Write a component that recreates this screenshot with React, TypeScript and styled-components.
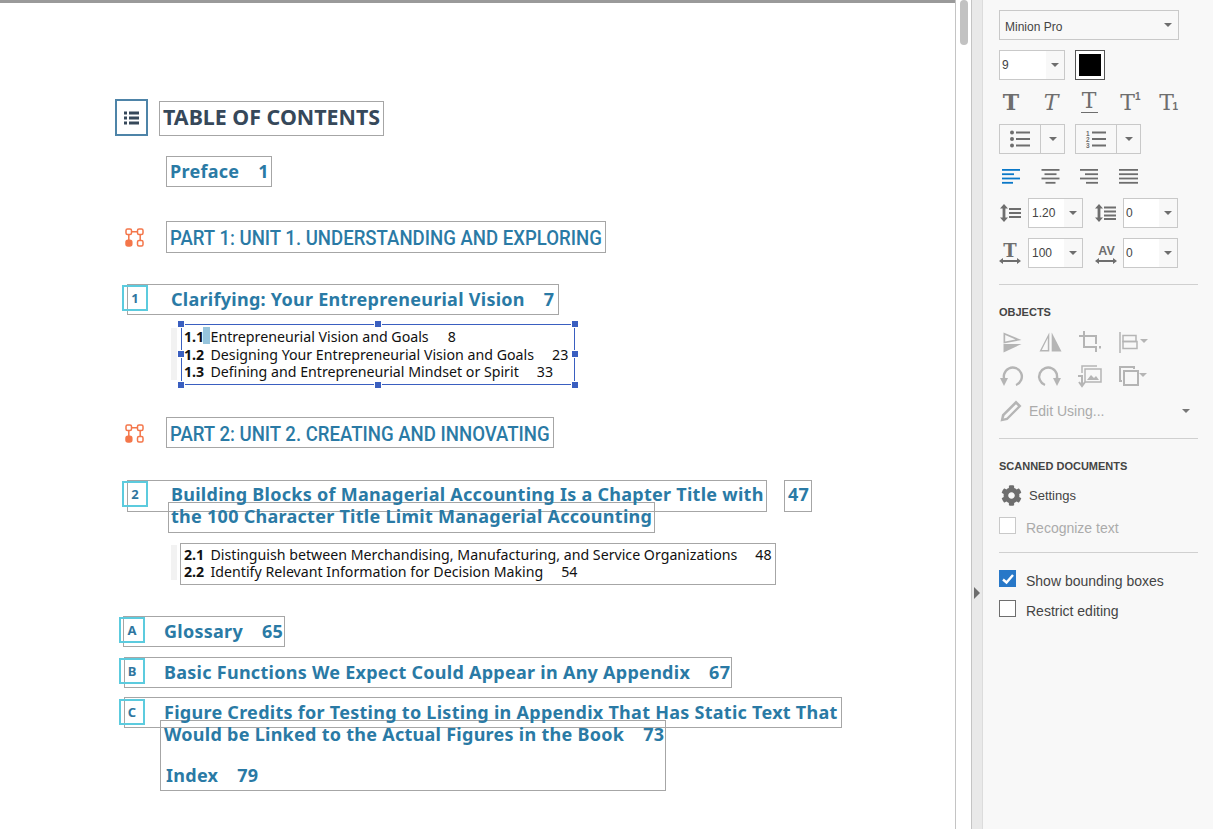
import React from 'react';
import styled, { createGlobalStyle } from 'styled-components';
import { FaCog } from 'react-icons/fa';

const GlobalStyle = createGlobalStyle`
  html, body { margin: 0; padding: 0; background: #fff; }
  body { width: 1213px; height: 829px; overflow: hidden; font-family: "Liberation Sans", Arial, sans-serif; }
  svg { display: block; overflow: visible; }
`;

const Page = styled.div`
  display: flex;
  width: 1213px;
  height: 829px;
`;

/* the document is a free canvas: every frame sits where the PDF editor found it */
const Canvas = styled.main`
  position: relative;
  flex: 0 0 955px;
  height: 829px;
  background: #fff;
  border-top: 3px solid #9a9a9a;
  box-sizing: border-box;
  overflow: hidden;
  font-family: "Noto Sans", sans-serif;
`;

const Layer = styled.div`
  position: absolute;
  left: 0;
  top: -3px;
  width: 955px;
  height: 829px;
`;

type FrameProps = { $x: number; $y: number; $w: number; $h: number };

const Frame = styled.div<FrameProps>`
  position: absolute;
  left: ${p => p.$x}px;
  top: ${p => p.$y}px;
  width: ${p => p.$w}px;
  height: ${p => p.$h}px;
  box-sizing: border-box;
  border: 1px solid #a6a6a6;
`;

const TocBadge = styled(Frame)`
  border: 2px solid #4e84a8;
  display: flex;
  align-items: center;
  justify-content: center;
  color: #36485a;
`;

const NumberBox = styled(Frame)`
  border: 2px solid #5ccbde;
  display: flex;
  align-items: center;
  justify-content: center;
  font-size: 13px;
  font-weight: 700;
  color: #2f769f;
`;

const Gutter = styled(Frame)`
  border: 0;
  background: #f2f2f2;
`;

const Caret = styled(Frame)`
  border: 0;
  background: #96c4dc;
`;

const SelectionFrame = styled(Frame)`
  border: 1px solid #3a5fc0;
`;

const Handle = styled.span<{ $x: number; $y: number }>`
  position: absolute;
  left: ${p => p.$x}px;
  top: ${p => p.$y}px;
  width: 6px;
  height: 6px;
  background: #3a5fc0;
  box-shadow: 0 0 0 1px #fff;
`;

const OrgMark = styled.svg<{ $x: number; $y: number }>`
  position: absolute;
  left: ${p => p.$x}px;
  top: ${p => p.$y}px;
`;

const TextLine = styled.div<{ $x: number; $y: number }>`
  position: absolute;
  left: ${p => p.$x}px;
  top: ${p => p.$y - 15}px;
  height: 30px;
  line-height: 30px;
  white-space: nowrap;
`;

const TocTitle = styled(TextLine)`
  font-size: 21.4px;
  font-weight: 700;
  color: #36485a;
`;

const Heading = styled(TextLine)`
  font-size: 18px;
  font-weight: 700;
  color: #2a7aa5;
  letter-spacing: 0.27px;
`;

const PartTitle = styled(TextLine)`
  font-family: Roboto, sans-serif;
  font-size: 21px;
  font-weight: 500;
  color: #2a7aa5;
  transform-origin: left center;
  transform: scaleX(0.885);
`;

const ListLine = styled(TextLine)`
  font-size: 14.19px;
  color: #111;
`;

const ListNumber = styled.b`
  font-weight: 700;
  display: inline-block;
  width: 26.5px;
`;

const PageNo = styled.span<{ $gap: number }>`
  margin-left: ${p => p.$gap}px;
`;

const Scrollbar = styled.div`
  flex: 0 0 17px;
  height: 829px;
  border-left: 1px solid #c4c4c4;
  border-right: 1px solid #c4c4c4;
  background: #fff;
  padding-left: 4px;
  box-sizing: border-box;
`;

const ScrollThumb = styled.div`
  width: 8px;
  height: 45px;
  border-radius: 4px;
  background: #c2c2c2;
`;

const Strip = styled.div`
  flex: 0 0 11px;
  height: 829px;
  background: #e9e9e9;
  border-right: 1px solid #dcdcdc;
  padding-top: 587px;
  padding-left: 2px;
  box-sizing: border-box;
`;

const StripArrow = styled.div`
  width: 0;
  height: 0;
  border-left: 6px solid #6e6e6e;
  border-top: 6px solid transparent;
  border-bottom: 6px solid transparent;
`;

const Panel = styled.aside`
  flex: 1;
  height: 829px;
  background: #f8f8f8;
  box-sizing: border-box;
  padding: 10px 15px 0 16px;
  color: #444;
  font-size: 12px;
  overflow: hidden;
`;

const Row = styled.div<{ $gap?: number; $top?: number; $pad?: number }>`
  display: flex;
  align-items: center;
  gap: ${p => p.$gap ?? 10}px;
  margin-top: ${p => p.$top ?? 0}px;
  padding-left: ${p => p.$pad ?? 0}px;
`;

const CheckRow = styled.label<{ $top: number }>`
  display: flex;
  align-items: flex-start;
  gap: 10px;
  height: 20px;
  margin-top: ${p => p.$top}px;
`;

const Field = styled.div<{ $w: number }>`
  display: flex;
  align-items: stretch;
  width: ${p => p.$w}px;
  height: 30px;
  box-sizing: border-box;
  border: 1px solid #c9c9c9;
  font-size: 12px;
  color: #444;
  flex: none;
`;

const FieldValue = styled.div<{ $white?: boolean; $pad?: number; $drop?: number }>`
  flex: 1;
  display: flex;
  align-items: center;
  padding-left: ${p => p.$pad ?? 2}px;
  padding-top: ${p => p.$drop ?? 0}px;
  background: ${p => (p.$white ? '#fff' : 'transparent')};
`;

const FieldArrow = styled.div<{ $w?: number; $line?: boolean }>`
  flex: 0 0 ${p => p.$w ?? 18}px;
  display: flex;
  align-items: center;
  justify-content: center;
  ${p => (p.$line ? 'border-left: 1px solid #c9c9c9;' : '')}
  &::after {
    content: '';
    border-top: 4px solid #6e6e6e;
    border-left: 4px solid transparent;
    border-right: 4px solid transparent;
  }
`;

const Swatch = styled.div`
  width: 30px;
  height: 30px;
  box-sizing: border-box;
  border: 1px solid #555;
  padding: 3px;
  background: #fff;
  &::after {
    content: '';
    display: block;
    width: 100%;
    height: 100%;
    background: #000;
  }
`;

const IconSlot = styled.div<{ $w: number; $muted?: boolean; $pad?: number }>`
  flex: 0 0 ${p => p.$w}px;
  box-sizing: border-box;
  padding-left: ${p => p.$pad ?? 0}px;
  display: flex;
  align-items: center;
  color: ${p => (p.$muted ? '#b5b5b5' : '#6e6e6e')};
`;

const Divider = styled.hr<{ $top: number }>`
  border: 0;
  height: 1px;
  background: #d0d0d0;
  margin: ${p => p.$top}px 0 0;
`;

const SectionTitle = styled.h3<{ $top: number }>`
  margin: ${p => p.$top}px 0 0;
  font-size: 11px;
  line-height: 14px;
  font-weight: 700;
  color: #444;
`;

const OptionLabel = styled.span<{ $muted?: boolean; $small?: boolean; $drop?: number }>`
  font-size: ${p => (p.$small ? 13 : 14)}px;
  line-height: 18px;
  margin-top: ${p => p.$drop ?? 0}px;
  color: ${p => (p.$muted ? '#ababab' : '#444')};
`;

const CheckBox = styled.span<{ $checked?: boolean; $muted?: boolean }>`
  flex: none;
  width: 17px;
  height: 17px;
  box-sizing: border-box;
  display: flex;
  align-items: center;
  justify-content: center;
  background: ${p => (p.$checked ? '#2878c8' : '#fff')};
  border: 1px solid ${p => (p.$checked ? '#2878c8' : p.$muted ? '#c9c9c9' : '#6e6e6e')};
`;

const MenuCaret = styled.span`
  margin-left: auto;
  margin-right: 8px;
  border-top: 4px solid #777;
  border-left: 4px solid transparent;
  border-right: 4px solid transparent;
`;

const serif = { fontFamily: '"DejaVu Serif", serif', fill: 'currentColor' };
const sans = { fontFamily: '"Liberation Sans", sans-serif', fill: 'currentColor' };

const TIcon = ({ kind }: { kind: 'bold' | 'italic' | 'under' | 'sup' | 'sub' }) => (
  <svg width="24" height="20" viewBox="0 0 24 20">
    <text
      x={kind === 'sup' || kind === 'sub' ? 11.5 : 12}
      y={kind === 'under' ? 16 : 18}
      textAnchor="middle"
      fontSize="22"
      fontWeight={kind === 'bold' ? 700 : 400}
      fontStyle={kind === 'italic' ? 'italic' : 'normal'}
      style={serif}
    >
      T
    </text>
    {kind === 'under' && <rect x="4" y="20" width="17" height="1" fill="currentColor" />}
    {kind === 'sup' && <text x="19" y="8" fontSize="10" fontWeight={700} style={sans}>1</text>}
    {kind === 'sub' && <text x="17.5" y="18" fontSize="10" fontWeight={700} style={sans}>1</text>}
  </svg>
);

const BulletIcon = () => (
  <svg width="20" height="18" viewBox="0 0 20 18" fill="currentColor">
    <circle cx="2" cy="2.5" r="2" /><rect x="6" y="1.5" width="14" height="2" />
    <circle cx="2" cy="9" r="2" /><rect x="6" y="8" width="14" height="2" />
    <circle cx="2" cy="15.5" r="2" /><rect x="6" y="14.5" width="14" height="2" />
  </svg>
);

const NumberIcon = () => (
  <svg width="20" height="18" viewBox="0 0 20 18" fill="currentColor">
    <text x="0" y="5.5" fontSize="6.5" fontWeight={700} style={sans}>1</text>
    <text x="0" y="11.5" fontSize="6.5" fontWeight={700} style={sans}>2</text>
    <text x="0" y="17.5" fontSize="6.5" fontWeight={700} style={sans}>3</text>
    <rect x="6" y="1.5" width="14" height="2" /><rect x="6" y="8" width="14" height="2" /><rect x="6" y="14.5" width="14" height="2" />
  </svg>
);

const AlignIcon = ({ widths, mode, blue }: { widths: number[]; mode: 'left' | 'center' | 'right'; blue?: boolean }) => (
  <svg width="19" height="16" viewBox="0 0 19 16" fill={blue ? '#0a78c8' : 'currentColor'}>
    {widths.map((w, i) => (
      <rect
        key={i}
        x={mode === 'left' ? 0 : mode === 'right' ? 19 - w : (19 - w) / 2}
        y={1 + i * 4.3}
        width={w}
        height="1.8"
      />
    ))}
  </svg>
);

const LineSpacingIcon = ({ tall }: { tall?: boolean }) => (
  <svg width="21" height="18" viewBox="0 0 21 18" fill="currentColor">
    <path d="M4 0 L8 4.5 H5.4 V13.5 H8 L4 18 L0 13.5 H2.6 V4.5 H0 Z" />
    {(tall ? [2.5, 6.5, 10.5, 14] : [4, 8, 12]).map(y => <rect key={y} x="9" y={y} width="12" height="2" />)}
  </svg>
);

const ScaleIcon = () => (
  <svg width="22" height="24" viewBox="0 0 22 24" fill="currentColor">
    <text x="11" y="16" textAnchor="middle" fontSize="18" fontWeight={700} style={serif}>T</text>
    <path d="M0 20 L4 17 V19 H18 V17 L22 20 L18 23 V21 H4 V23 Z" />
  </svg>
);

const KerningIcon = () => (
  <svg width="22" height="24" viewBox="0 0 22 24" fill="currentColor">
    <text x="11.5" y="14" textAnchor="middle" fontSize="12.5" fontWeight={700} style={sans}>AV</text>
    <path d="M0 20 L4 17 V19 H18 V17 L22 20 L18 23 V21 H4 V23 Z" />
  </svg>
);

const FlipV = () => (
  <svg width="19" height="21" viewBox="0 0 19 21" fill="currentColor">
    <path d="M0.5 0.5 L18.5 8 L0.5 11.5 Z M2.2 3 V9.6 L12.5 7.6 Z" fillRule="evenodd" />
    <path d="M0.5 12 H18.5 L0.5 20.5 Z" />
  </svg>
);

const FlipH = () => (
  <svg width="23" height="20" viewBox="0 0 23 20" fill="currentColor">
    <path d="M10.3 0.5 V19.5 H0.5 Z M8.8 6 L2.8 18 H8.8 Z" fillRule="evenodd" />
    <path d="M12.7 0.5 V19.5 H22.5 Z" />
  </svg>
);

const Crop = () => (
  <svg width="23" height="22" viewBox="0 0 23 22" fill="none" stroke="currentColor" strokeWidth="2">
    <path d="M6 0 V16 H18 V21 M1 5 H18 V13" />
    <rect x="21" y="15" width="2" height="2.5" fill="currentColor" stroke="none" />
  </svg>
);

const Arrange = () => (
  <svg width="29" height="21" viewBox="0 0 29 21">
    <g fill="none" stroke="currentColor" strokeWidth="1.5">
      <path d="M1 0 V21" />
      <rect x="4" y="3.5" width="13" height="6" />
      <rect x="4" y="9.5" width="14" height="7" />
    </g>
    <path d="M21 7 H29 L25 11 Z" fill="currentColor" />
  </svg>
);

const RotateLeft = () => (
  <svg width="22" height="21" viewBox="0 0 22 21" fill="none" stroke="currentColor" strokeWidth="2.4">
    <path d="M5 15 A9 9 0 1 1 16 19" />
    <path d="M0 12 H8 L4 20 Z" fill="currentColor" stroke="none" />
  </svg>
);

const RotateRight = () => (
  <svg width="22" height="21" viewBox="0 0 22 21" fill="none" stroke="currentColor" strokeWidth="2.4">
    <path d="M17 15 A9 9 0 1 0 6 19" />
    <path d="M22 12 H14 L18 20 Z" fill="currentColor" stroke="none" />
  </svg>
);

const ReplaceImage = () => (
  <svg width="24" height="22" viewBox="0 0 24 22" fill="none" stroke="currentColor" strokeWidth="1.5">
    <path d="M4 8 V1 H19" />
    <rect x="7" y="4" width="16" height="13" />
    <path d="M9 15 L13 10 L16 13 L18 11 L21 15 Z" fill="currentColor" stroke="none" />
    <path d="M0 11 H5 M4 11 V20 M1 17 L4 21 L7 17" strokeWidth="2" />
  </svg>
);

const Duplicate = () => (
  <svg width="28" height="20" viewBox="0 0 28 20">
    <g fill="none" stroke="currentColor" strokeWidth="2">
      <path d="M3 15 H1 V1 H15 V3" />
      <rect x="5" y="5" width="14" height="14" />
    </g>
    <path d="M20 7 H28 L24 11 Z" fill="currentColor" />
  </svg>
);

const Pencil = () => (
  <svg width="22" height="22" viewBox="0 0 22 22" fill="currentColor">
    <path d="M16 0.5 L21.5 6 L7.5 20 L0.5 21.5 L2 14.5 Z M16 4.2 L4.6 15.6 L3.6 18.6 L6.6 17.8 L18 6.3 Z" fillRule="evenodd" />
  </svg>
);

const TocListIcon = () => (
  <svg width="15" height="14" viewBox="0 0 15 14" fill="currentColor">
    <rect x="0" y="0.5" width="3" height="3" /><rect x="5" y="0.5" width="10" height="3" />
    <rect x="0" y="5.5" width="3" height="3" /><rect x="5" y="5.5" width="10" height="3" />
    <rect x="0" y="10.5" width="3" height="3" /><rect x="5" y="10.5" width="10" height="3" />
  </svg>
);

const PartIcon = ({ x, y }: { x: number; y: number }) => (
  <OrgMark $x={x} $y={y} width="19" height="19" viewBox="0 0 19 19" fill="none" stroke="#f4764a" strokeWidth="1.5">
    <rect x="1" y="1" width="5.5" height="5.5" rx="1.5" />
    <rect x="12.5" y="1" width="5.5" height="5.5" rx="1.5" />
    <rect x="12.5" y="12.5" width="5.5" height="5.5" rx="1.5" />
    <rect x="1" y="12.2" width="5.8" height="5.8" rx="2" fill="#f4764a" />
    <path d="M6.5 3.8 H12.5 M3.8 6.5 V12 M15.2 6.5 V12.5" />
  </OrgMark>
);

const Check = () => (
  <svg width="12" height="10" viewBox="0 0 12 10" fill="none" stroke="#fff" strokeWidth="2.4">
    <path d="M1 5.5 L4.5 8.5 L11 1" />
  </svg>
);

const handles: [number, number][] = [
  [178, 321], [375, 321], [572, 321],
  [178, 351], [572, 351],
  [178, 382], [375, 382], [572, 382],
];

const boxes: FrameProps[] = [
  { $x: 159, $y: 101, $w: 225, $h: 35 },
  { $x: 166, $y: 156, $w: 106, $h: 31 },
  { $x: 166, $y: 221, $w: 440, $h: 32 },
  { $x: 127, $y: 284, $w: 432, $h: 31 },
  { $x: 166, $y: 417, $w: 388, $h: 31 },
  { $x: 127, $y: 480, $w: 640, $h: 32 },
  { $x: 168, $y: 502, $w: 487, $h: 31 },
  { $x: 784, $y: 480, $w: 28, $h: 32 },
  { $x: 180, $y: 543, $w: 596, $h: 42 },
  { $x: 123, $y: 616, $w: 162, $h: 31 },
  { $x: 124, $y: 657, $w: 608, $h: 31 },
  { $x: 124, $y: 697, $w: 718, $h: 31 },
  { $x: 160, $y: 720, $w: 506, $h: 71 },
];

const markers = [
  { label: '1', x: 122, y: 285 },
  { label: '2', x: 122, y: 481 },
  { label: 'A', x: 119, y: 617 },
  { label: 'B', x: 119, y: 658 },
  { label: 'C', x: 119, y: 699 },
];

const listLines = [
  { no: '1.1', text: 'Entrepreneurial Vision and Goals', page: '8', gap: 19, y: 337 },
  { no: '1.2', text: 'Designing Your Entrepreneurial Vision and Goals', page: '23', gap: 18, y: 355 },
  { no: '1.3', text: 'Defining and Entrepreneurial Mindset or Spirit', page: '33', gap: 18, y: 372 },
  { no: '2.1', text: 'Distinguish between Merchandising, Manufacturing, and Service Organizations', page: '48', gap: 18, y: 555 },
  { no: '2.2', text: 'Identify Relevant Information for Decision Making', page: '54', gap: 18, y: 572 },
];

const App = () => (
  <Page>
    <GlobalStyle />
    <Canvas>
      <Layer>
        <TocBadge $x={115} $y={99} $w={33} $h={37}>
          <TocListIcon />
        </TocBadge>
        {boxes.map(b => <Frame key={`${b.$x}-${b.$y}`} {...b} />)}
        {markers.map(m => (
          <NumberBox key={m.label} $x={m.x} $y={m.y} $w={26} $h={26}>{m.label}</NumberBox>
        ))}
        <PartIcon x={125} y={228} />
        <PartIcon x={125} y={424} />

        <TocTitle $x={163} $y={117}>TABLE OF CONTENTS</TocTitle>
        <Heading $x={170} $y={171}>Preface<PageNo $gap={19}>1</PageNo></Heading>
        <PartTitle $x={170} $y={238}>PART 1: UNIT 1. UNDERSTANDING AND EXPLORING</PartTitle>
        <Heading $x={171} $y={299}>Clarifying: Your Entrepreneurial Vision<PageNo $gap={19}>7</PageNo></Heading>

        <Gutter $x={171} $y={328} $w={6} $h={52} />
        <Caret $x={203} $y={327} $w={7} $h={17} />
        <SelectionFrame $x={181} $y={324} $w={394} $h={61} />
        {handles.map(([x, y]) => <Handle key={`${x}-${y}`} $x={x} $y={y} />)}

        <PartTitle $x={170} $y={434}>PART 2: UNIT 2. CREATING AND INNOVATING</PartTitle>
        <Heading $x={171} $y={494}>Building Blocks of Managerial Accounting Is a Chapter Title with</Heading>
        <Heading $x={788} $y={494}>47</Heading>
        <Heading $x={171} $y={516}>the 100 Character Title Limit Managerial Accounting</Heading>

        <Gutter $x={171} $y={545} $w={6} $h={35} />
        {listLines.map(l => (
          <ListLine key={l.no} $x={184} $y={l.y}>
            <ListNumber>{l.no}</ListNumber>{l.text}<PageNo $gap={l.gap}>{l.page}</PageNo>
          </ListLine>
        ))}

        <Heading $x={164} $y={631}>Glossary<PageNo $gap={19}>65</PageNo></Heading>
        <Heading $x={164} $y={672}>Basic Functions We Expect Could Appear in Any Appendix<PageNo $gap={19}>67</PageNo></Heading>
        <Heading $x={164} $y={712}>Figure Credits for Testing to Listing in Appendix That Has Static Text That</Heading>
        <Heading $x={164} $y={734}>Would be Linked to the Actual Figures in the Book<PageNo $gap={19}>73</PageNo></Heading>
        <Heading $x={166} $y={775}>Index<PageNo $gap={19}>79</PageNo></Heading>
      </Layer>
    </Canvas>

    <Scrollbar><ScrollThumb /></Scrollbar>
    <Strip><StripArrow /></Strip>

    <Panel>
      <Field $w={180}>
        <FieldValue $pad={5} $drop={3}>Minion Pro</FieldValue>
        <FieldArrow $w={20} />
      </Field>

      <Row $top={10}>
        <Field $w={66}>
          <FieldValue $white>9</FieldValue>
          <FieldArrow />
        </Field>
        <Swatch />
      </Row>

      <Row $gap={0} $top={12}>
        <IconSlot $w={40}><TIcon kind="bold" /></IconSlot>
        <IconSlot $w={38}><TIcon kind="italic" /></IconSlot>
        <IconSlot $w={39}><TIcon kind="under" /></IconSlot>
        <IconSlot $w={39}><TIcon kind="sup" /></IconSlot>
        <IconSlot $w={24}><TIcon kind="sub" /></IconSlot>
      </Row>

      <Row $top={12}>
        <Field $w={66}>
          <FieldValue $pad={10}><IconSlot $w={20}><BulletIcon /></IconSlot></FieldValue>
          <FieldArrow $w={23} $line />
        </Field>
        <Field $w={66}>
          <FieldValue $pad={10}><IconSlot $w={20}><NumberIcon /></IconSlot></FieldValue>
          <FieldArrow $w={23} $line />
        </Field>
      </Row>

      <Row $gap={0} $top={14} $pad={3}>
        <IconSlot $w={39}><AlignIcon widths={[18, 12, 18, 11]} mode="left" blue /></IconSlot>
        <IconSlot $w={38}><AlignIcon widths={[18, 12, 18, 10]} mode="center" /></IconSlot>
        <IconSlot $w={40}><AlignIcon widths={[18, 13, 18, 12]} mode="right" /></IconSlot>
        <IconSlot $w={22}><AlignIcon widths={[19, 19, 19, 19]} mode="left" /></IconSlot>
      </Row>

      <Row $gap={0} $top={14}>
        <IconSlot $w={29} $pad={1}><LineSpacingIcon /></IconSlot>
        <Field $w={55}><FieldValue $white $pad={3}>1.20</FieldValue><FieldArrow /></Field>
        <IconSlot $w={40} $pad={12}><LineSpacingIcon tall /></IconSlot>
        <Field $w={55}><FieldValue $white $pad={2}>0</FieldValue><FieldArrow /></Field>
      </Row>

      <Row $gap={0} $top={10}>
        <IconSlot $w={29}><ScaleIcon /></IconSlot>
        <Field $w={55}><FieldValue $white $pad={3}>100</FieldValue><FieldArrow /></Field>
        <IconSlot $w={40} $pad={12}><KerningIcon /></IconSlot>
        <Field $w={55}><FieldValue $white $pad={2}>0</FieldValue><FieldArrow /></Field>
      </Row>

      <Divider $top={16} />
      <SectionTitle $top={20}>OBJECTS</SectionTitle>

      <Row $gap={0} $top={12} $pad={4}>
        <IconSlot $w={36} $muted><FlipV /></IconSlot>
        <IconSlot $w={39} $muted><FlipH /></IconSlot>
        <IconSlot $w={41} $muted><Crop /></IconSlot>
        <IconSlot $w={29} $muted><Arrange /></IconSlot>
      </Row>

      <Row $gap={0} $top={12} $pad={1}>
        <IconSlot $w={39} $muted><RotateLeft /></IconSlot>
        <IconSlot $w={39} $muted><RotateRight /></IconSlot>
        <IconSlot $w={41} $muted><ReplaceImage /></IconSlot>
        <IconSlot $w={28} $muted><Duplicate /></IconSlot>
      </Row>

      <Row $gap={7} $top={13}>
        <IconSlot $w={22} $muted $pad={1}><Pencil /></IconSlot>
        <OptionLabel $muted>Edit Using...</OptionLabel>
        <MenuCaret />
      </Row>

      <Divider $top={16} />
      <SectionTitle $top={20}>SCANNED DOCUMENTS</SectionTitle>

      <Row $gap={0} $top={12}>
        <IconSlot $w={30} $pad={2}><FaCog size={21} /></IconSlot>
        <OptionLabel $small>Settings</OptionLabel>
      </Row>

      <CheckRow $top={11}>
        <CheckBox $muted />
        <OptionLabel $muted $drop={2}>Recognize text</OptionLabel>
      </CheckRow>

      <Divider $top={15} />

      <CheckRow $top={17}>
        <CheckBox $checked><Check /></CheckBox>
        <OptionLabel $drop={2}>Show bounding boxes</OptionLabel>
      </CheckRow>

      <CheckRow $top={10}>
        <CheckBox />
        <OptionLabel $drop={2}>Restrict editing</OptionLabel>
      </CheckRow>
    </Panel>
  </Page>
);

export default App;
